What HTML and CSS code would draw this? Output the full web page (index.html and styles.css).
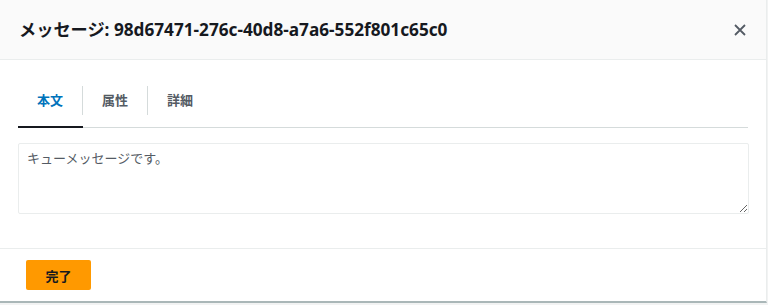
FILE: index.html
```html
<!DOCTYPE html>
<html lang="ja">
<head>
<meta charset="utf-8">
<link rel="stylesheet" href="styles.css">
</head>
<body>
<div class="modal">
  <div class="header">
    <h2 class="title">メッセージ: 98d67471-276c-40d8-a7a6-552f801c65c0</h2>
    <button class="close" aria-label="閉じる">
      <svg width="16" height="16" viewBox="0 0 16 16"><path d="M3 3 13 13M13 3 3 13" stroke="#545b64" stroke-width="1.8" fill="none"/></svg>
    </button>
  </div>
  <div class="content">
    <div class="tabs">
      <div class="tab active"><span class="label">本文</span></div>
      <div class="tab"><span class="label">属性</span></div>
      <div class="tab"><span class="label last">詳細</span></div>
    </div>
    <textarea class="body-text" readonly>キューメッセージです。</textarea>
  </div>
  <div class="footer">
    <button class="primary">完了</button>
  </div>
</div>
</body>
</html>
```
FILE: styles.css
```css
html, body {
  margin: 0;
  padding: 0;
  background: #f2f3f3;
  font-family: "Noto Sans", "Noto Sans CJK JP", sans-serif;
}
.modal {
  width: 766px;
  height: 301px;
  background: #ffffff;
  border-right: 1px solid #eaeded;
  border-bottom: 2px solid #aab7b8;
  display: flex;
  flex-direction: column;
}
.header {
  height: 59px;
  background: #fafafa;
  border-bottom: 1px solid #eaeded;
  display: flex;
  align-items: center;
  justify-content: space-between;
  padding: 0 18px 0 19px;
}
.title {
  margin: 0;
  font-size: 17.2px;
  font-weight: 700;
  color: #16191f;
  line-height: 20px;
}
.close {
  border: 0;
  background: none;
  padding: 0;
  width: 16px;
  height: 16px;
  display: flex;
}
.content {
  padding: 19px 18px 0 18px;
  height: 169px;
}
.tabs {
  display: flex;
  border-bottom: 1px solid #d5dbdb;
}
.tab {
  padding: 7px 0 11px;
  border-bottom: 2px solid transparent;
  margin-bottom: -1px;
}
.tab.active {
  border-bottom-color: #16191f;
}
.label {
  display: block;
  padding: 0 19px;
  height: 29px;
  line-height: 29px;
  font-size: 13px;
  font-weight: 700;
  color: #545b64;
  border-right: 1px solid #d5dbdb;
}
.label.last {
  border-right: 0;
}
.tab.active .label {
  color: #0073bb;
}
.body-text {
  display: block;
  box-sizing: border-box;
  margin-top: 15px;
  width: 731px;
  height: 71px;
  border: 1px solid #eaeded;
  border-radius: 2px;
  padding: 4px 8px;
  font-family: "Noto Sans", "Noto Sans CJK JP", sans-serif;
  font-size: 13px;
  line-height: 20px;
  color: #545b64;
  outline: none;
}
.footer {
  border-top: 1px solid #eaeded;
  padding: 11px 26px;
  height: 30px;
}
.primary {
  width: 65px;
  height: 30px;
  border: 0;
  border-radius: 2px;
  background: #ff9900;
  color: #16191f;
  font-family: "Noto Sans", "Noto Sans CJK JP", sans-serif;
  font-size: 13px;
  font-weight: 700;
  padding: 0;
}
```
